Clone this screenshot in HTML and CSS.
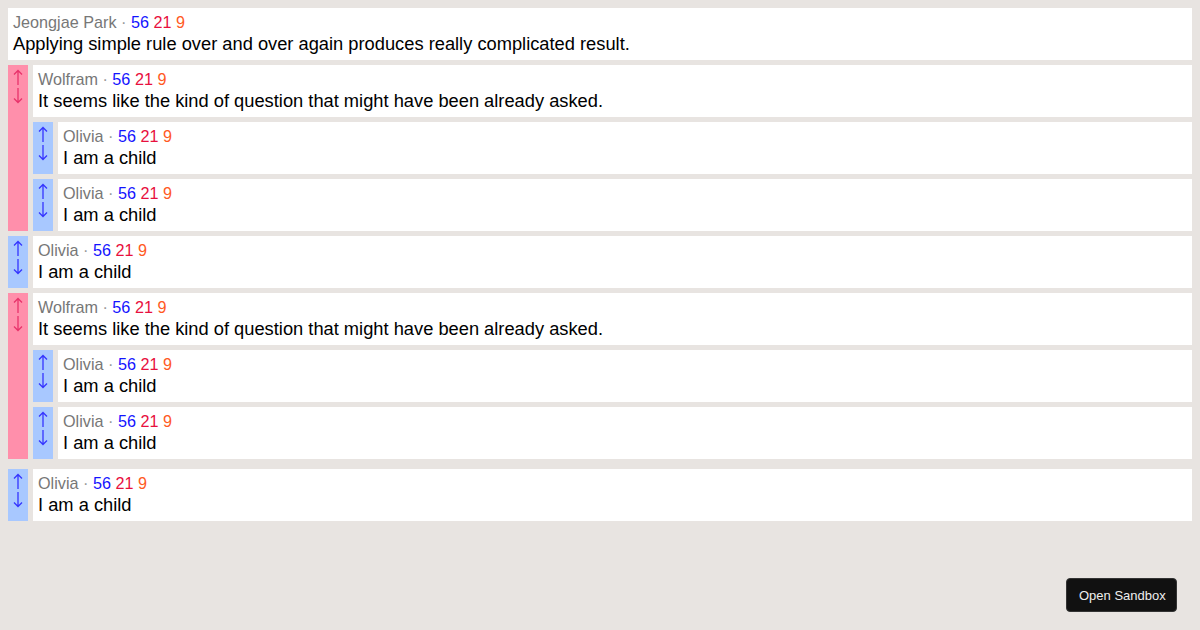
FILE: index.html
```html
<!DOCTYPE html>
<html>
<head>
<meta charset="utf-8">
<link rel="stylesheet" href="styles.css">
</head>
<body>
<div class="tree">
  <div class="card">
    <div class="head"><span class="name">Jeongjae Park</span> <span class="dot">·</span> <span class="up">56</span> <span class="down">21</span> <span class="cnt">9</span></div>
    <div class="body">Applying simple rule over and over again produces really complicated result.</div>
  </div>

  <div class="row">
    <div class="vote pink"><svg class="arrows" viewBox="0 0 20 40" width="20" height="40"><path d="M10 5.5V20M6 9.5L10 5.5L14 9.5M10 23V37.5M6 33.5L10 37.5L14 33.5"/></svg></div>
    <div class="col">
      <div class="card">
        <div class="head"><span class="name">Wolfram</span> <span class="dot">·</span> <span class="up">56</span> <span class="down">21</span> <span class="cnt">9</span></div>
        <div class="body">It seems like the kind of question that might have been already asked.</div>
      </div>
      <div class="row">
        <div class="vote blue"><svg class="arrows" viewBox="0 0 20 40" width="20" height="40"><path d="M10 5.5V20M6 9.5L10 5.5L14 9.5M10 23V37.5M6 33.5L10 37.5L14 33.5"/></svg></div>
        <div class="col">
          <div class="card">
            <div class="head"><span class="name">Olivia</span> <span class="dot">·</span> <span class="up">56</span> <span class="down">21</span> <span class="cnt">9</span></div>
            <div class="body">I am a child</div>
          </div>
        </div>
      </div>
      <div class="row">
        <div class="vote blue"><svg class="arrows" viewBox="0 0 20 40" width="20" height="40"><path d="M10 5.5V20M6 9.5L10 5.5L14 9.5M10 23V37.5M6 33.5L10 37.5L14 33.5"/></svg></div>
        <div class="col">
          <div class="card">
            <div class="head"><span class="name">Olivia</span> <span class="dot">·</span> <span class="up">56</span> <span class="down">21</span> <span class="cnt">9</span></div>
            <div class="body">I am a child</div>
          </div>
        </div>
      </div>
    </div>
  </div>

  <div class="row">
    <div class="vote blue"><svg class="arrows" viewBox="0 0 20 40" width="20" height="40"><path d="M10 5.5V20M6 9.5L10 5.5L14 9.5M10 23V37.5M6 33.5L10 37.5L14 33.5"/></svg></div>
    <div class="col">
      <div class="card">
        <div class="head"><span class="name">Olivia</span> <span class="dot">·</span> <span class="up">56</span> <span class="down">21</span> <span class="cnt">9</span></div>
        <div class="body">I am a child</div>
      </div>
    </div>
  </div>

  <div class="row">
    <div class="vote pink"><svg class="arrows" viewBox="0 0 20 40" width="20" height="40"><path d="M10 5.5V20M6 9.5L10 5.5L14 9.5M10 23V37.5M6 33.5L10 37.5L14 33.5"/></svg></div>
    <div class="col">
      <div class="card">
        <div class="head"><span class="name">Wolfram</span> <span class="dot">·</span> <span class="up">56</span> <span class="down">21</span> <span class="cnt">9</span></div>
        <div class="body">It seems like the kind of question that might have been already asked.</div>
      </div>
      <div class="row">
        <div class="vote blue"><svg class="arrows" viewBox="0 0 20 40" width="20" height="40"><path d="M10 5.5V20M6 9.5L10 5.5L14 9.5M10 23V37.5M6 33.5L10 37.5L14 33.5"/></svg></div>
        <div class="col">
          <div class="card">
            <div class="head"><span class="name">Olivia</span> <span class="dot">·</span> <span class="up">56</span> <span class="down">21</span> <span class="cnt">9</span></div>
            <div class="body">I am a child</div>
          </div>
        </div>
      </div>
      <div class="row">
        <div class="vote blue"><svg class="arrows" viewBox="0 0 20 40" width="20" height="40"><path d="M10 5.5V20M6 9.5L10 5.5L14 9.5M10 23V37.5M6 33.5L10 37.5L14 33.5"/></svg></div>
        <div class="col">
          <div class="card">
            <div class="head"><span class="name">Olivia</span> <span class="dot">·</span> <span class="up">56</span> <span class="down">21</span> <span class="cnt">9</span></div>
            <div class="body">I am a child</div>
          </div>
        </div>
      </div>
    </div>
  </div>
</div>

<div class="tree second">
  <div class="row">
    <div class="vote blue"><svg class="arrows" viewBox="0 0 20 40" width="20" height="40"><path d="M10 5.5V20M6 9.5L10 5.5L14 9.5M10 23V37.5M6 33.5L10 37.5L14 33.5"/></svg></div>
    <div class="col">
      <div class="card">
        <div class="head"><span class="name">Olivia</span> <span class="dot">·</span> <span class="up">56</span> <span class="down">21</span> <span class="cnt">9</span></div>
        <div class="body">I am a child</div>
      </div>
    </div>
  </div>
</div>

<button class="sandbox">Open Sandbox</button>
</body>
</html>
```

FILE: styles.css
```css
html, body {
  margin: 0;
  padding: 0;
}
body {
  background: #e8e4e1;
  padding: 8px;
  font-family: "Liberation Sans", Arial, sans-serif;
  height: 630px;
  box-sizing: border-box;
  position: relative;
}
.tree {
  display: flex;
  flex-direction: column;
  gap: 5px;
}
.second {
  margin-top: 10px;
}
.col {
  display: flex;
  flex-direction: column;
  gap: 5px;
  flex: 1;
  min-width: 0;
}
.row {
  display: flex;
  gap: 5px;
}
.card {
  background: #fff;
  padding: 3px 5px 6px 5px;
  height: 52px;
  box-sizing: border-box;
}
.head {
  font-size: 16.2px;
  line-height: 22px;
  color: #777;
}
.dot { color: #999; }
.up { color: #1414ff; }
.down { color: #e8103e; }
.cnt { color: #ff5a1f; }
.body {
  font-size: 18.3px;
  line-height: 21px;
  color: #000;
}
.vote {
  width: 20px;
  flex: none;
}
.arrows {
  display: block;
  fill: none;
  stroke: currentColor;
  stroke-width: 1.3;
}
.vote.pink {
  background: #ff8fab;
  color: #e8336b;
}
.vote.blue {
  background: #a8c8ff;
  color: #3535ff;
}
.sandbox {
  position: absolute;
  right: 23px;
  bottom: 18px;
  background: #111;
  color: #eee;
  border: 1px solid #333;
  border-radius: 4px;
  font-family: "Liberation Sans", Arial, sans-serif;
  font-size: 13px;
  white-space: nowrap;
  padding: 0 12px;
  height: 34px;
  width: 111px;
}
```
